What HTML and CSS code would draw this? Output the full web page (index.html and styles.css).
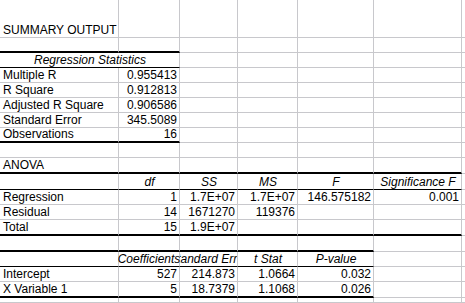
FILE: index.html
```html
<!DOCTYPE html>
<html>
<head>
<meta charset="utf-8">
<link rel="stylesheet" href="styles.css">
</head>
<body>
<div class="sheet">
  <!-- r1 -->
  <div class="c">SUMMARY OUTPUT</div><div class="c"></div><div class="c"></div><div class="c"></div><div class="c"></div><div class="c"></div><div class="c g"></div>
  <!-- r2 -->
  <div class="c tb"></div><div class="c tb"></div><div class="c"></div><div class="c"></div><div class="c"></div><div class="c"></div><div class="c g"></div>
  <!-- r3 -->
  <div class="c h hb span2">Regression Statistics</div><div class="c"></div><div class="c"></div><div class="c"></div><div class="c"></div><div class="c g"></div>
  <!-- r4 -->
  <div class="c">Multiple R</div><div class="c n">0.955413</div><div class="c"></div><div class="c"></div><div class="c"></div><div class="c"></div><div class="c g"></div>
  <!-- r5 -->
  <div class="c">R Square</div><div class="c n">0.912813</div><div class="c"></div><div class="c"></div><div class="c"></div><div class="c"></div><div class="c g"></div>
  <!-- r6 -->
  <div class="c">Adjusted R Square</div><div class="c n">0.906586</div><div class="c"></div><div class="c"></div><div class="c"></div><div class="c"></div><div class="c g"></div>
  <!-- r7 -->
  <div class="c">Standard Error</div><div class="c n">345.5089</div><div class="c"></div><div class="c"></div><div class="c"></div><div class="c"></div><div class="c g"></div>
  <!-- r8 -->
  <div class="c tb">Observations</div><div class="c n tb">16</div><div class="c"></div><div class="c"></div><div class="c"></div><div class="c"></div><div class="c g"></div>
  <!-- r9 -->
  <div class="c"></div><div class="c"></div><div class="c"></div><div class="c"></div><div class="c"></div><div class="c"></div><div class="c g"></div>
  <!-- r10 -->
  <div class="c tb">ANOVA</div><div class="c tb"></div><div class="c tb"></div><div class="c tb"></div><div class="c tb"></div><div class="c tb"></div><div class="c g"></div>
  <!-- r11 -->
  <div class="c hb"></div><div class="c h hb">df</div><div class="c h hb">SS</div><div class="c h hb">MS</div><div class="c h hb">F</div><div class="c h hb">Significance F</div><div class="c g"></div>
  <!-- r12 -->
  <div class="c">Regression</div><div class="c n">1</div><div class="c n">1.7E+07</div><div class="c n">1.7E+07</div><div class="c n">146.575182</div><div class="c n">0.001</div><div class="c g"></div>
  <!-- r13 -->
  <div class="c">Residual</div><div class="c n">14</div><div class="c n">1671270</div><div class="c n">119376</div><div class="c"></div><div class="c"></div><div class="c g"></div>
  <!-- r14 -->
  <div class="c tb">Total</div><div class="c n tb">15</div><div class="c n tb">1.9E+07</div><div class="c tb"></div><div class="c tb"></div><div class="c tb"></div><div class="c g"></div>
  <!-- r15 -->
  <div class="c tb"></div><div class="c tb"></div><div class="c tb"></div><div class="c tb"></div><div class="c tb"></div><div class="c"></div><div class="c g"></div>
  <!-- r16 -->
  <div class="c hb"></div><div class="c h hb spill">Coefficients</div><div class="c h hb clip">Standard Error</div><div class="c h hb">t Stat</div><div class="c h hb">P-value</div><div class="c"></div><div class="c g"></div>
  <!-- r17 -->
  <div class="c">Intercept</div><div class="c n">527</div><div class="c n">214.873</div><div class="c n">1.0664</div><div class="c n">0.032</div><div class="c"></div><div class="c g"></div>
  <!-- r18 -->
  <div class="c tb">X Variable 1</div><div class="c n tb">5</div><div class="c n tb">18.7379</div><div class="c n tb">1.1068</div><div class="c n tb">0.026</div><div class="c"></div><div class="c g"></div>
  <!-- r19 -->
  <div class="c"></div><div class="c"></div><div class="c"></div><div class="c"></div><div class="c"></div><div class="c"></div><div class="c g"></div>
</div>
</body>
</html>
```

FILE: styles.css
```css
html, body {
  margin: 0;
  padding: 0;
  background: #ffffff;
  overflow: hidden;
}

.sheet {
  display: grid;
  grid-template-columns: 119px 61px 58px 60px 76px 88px 3px;
  grid-template-rows: 38px 15px 15px 15px 15px 15px 15px 15px 15px 16px 16px 15px 15px 16px 16px 15px 15px 16px 5px;
  width: 465px;
  height: 303px;
  overflow: hidden;
  font-family: "Liberation Sans", Arial, sans-serif;
  font-size: 12px;
  line-height: 14px;
  color: #000000;
}

.c {
  box-sizing: border-box;
  border-right: 1px solid #c8c8cc;
  border-bottom: 1px solid #c8c8cc;
  background: #ffffff;
  display: flex;
  align-items: flex-end;
  justify-content: flex-start;
  padding: 0 2px 0 3px;
  white-space: nowrap;
  overflow: hidden;
}

.g {
  border-right: none;
  padding: 0;
}

.n {
  justify-content: flex-end;
}

.h {
  font-style: italic;
  justify-content: center;
}

.span2 {
  grid-column: span 2;
}

.hb {
  border-bottom: 1px solid #000000;
}

.tb {
  border-bottom: 2px solid #000000;
}

.spill {
  overflow: visible;
  padding: 0;
}

.clip {
  padding: 0;
}
```
